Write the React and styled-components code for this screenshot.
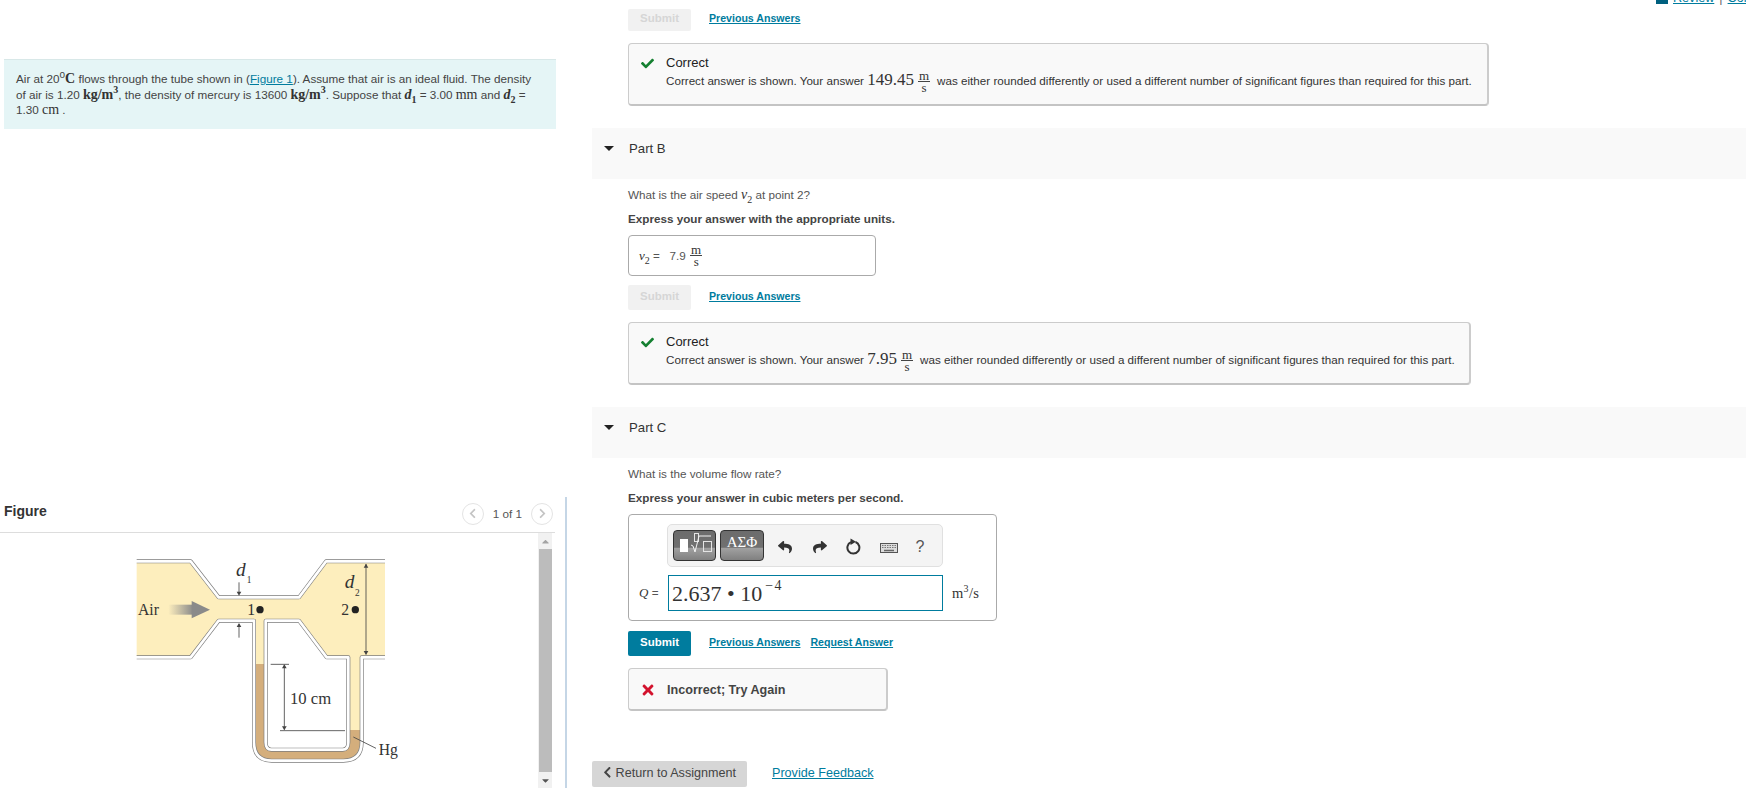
import React from 'react'
import styled, { createGlobalStyle } from 'styled-components'
import { FaCheck, FaTimes, FaChevronLeft, FaChevronRight, FaReply, FaShare, FaCaretDown, FaCaretUp } from 'react-icons/fa'

const GlobalStyle = createGlobalStyle`
  html, body { margin: 0; padding: 0; height: 788px; overflow: hidden; background: #fff; }
  body { font-family: "Liberation Sans", Arial, sans-serif; font-size: 11.7px; color: #444; }
`

const Page = styled.div`
  position: relative;
  display: flex;
  width: 1746px;
  height: 788px;
  overflow: hidden;
`

const LeftPane = styled.div`
  width: 567px;
  flex: none;
  display: flex;
  flex-direction: column;
  padding-top: 59px;
  box-sizing: border-box;
`

const RightPane = styled.div`
  flex: 1;
  padding-left: 25px;
  min-width: 0;
`

const Intro = styled.div`
  margin-left: 4px;
  width: 552px;
  height: 70px;
  box-sizing: border-box;
  padding: 11px 0 0 12px;
  background: #e5f5f6;
  border-top: 1px solid #d8e8e8;
  line-height: 15.5px;
  white-space: nowrap;
`

const Link = styled.a`
  color: #007c9e;
  text-decoration: underline;
  white-space: nowrap;
  font-size: ${p => p.$size || 11.7}px;
  font-weight: ${p => (p.$bold ? 700 : 400)};
`

const FeedbackLink = styled(Link)`
  margin-bottom: 3px;
`

const MathText = styled.span`
  font-family: "Liberation Serif", "DejaVu Serif", serif;
  font-size: ${p => p.$size || 14}px;
  font-style: ${p => (p.$italic ? 'italic' : 'normal')};
  font-weight: ${p => (p.$bold ? 700 : 400)};
  color: #333;
`

const MathSub = styled.sub`
  font-size: 10px;
  font-style: normal;
  line-height: 0;
`

const MathSup = styled.sup`
  font-size: 10px;
  line-height: 0;
`

const FigureSection = styled.div`
  margin-top: 368px;
  flex: 1;
  display: flex;
  flex-direction: column;
  border-right: 2px solid #c5d6e6;
  min-height: 0;
`

const FigureHeader = styled.div`
  height: 36px;
  box-sizing: border-box;
  margin-right: 10px;
  padding: 0 2px 0 4px;
  display: flex;
  align-items: center;
  border-bottom: 1px solid #ddd;
`

const FigureTitle = styled.div`
  flex: 1;
  margin-bottom: 8px;
  font-size: 14px;
  font-weight: 700;
  color: #333;
`

const Pager = styled.div`
  display: flex;
  align-items: center;
  gap: 9px;
  margin-bottom: 2px;
  color: #555;
`

const PagerButton = styled.div`
  width: 22px;
  height: 22px;
  box-sizing: border-box;
  border: 1px solid #e4e4e4;
  border-radius: 50%;
  display: flex;
  align-items: center;
  justify-content: center;
  color: #c4c4c4;
  font-size: 11px;
`

const FigureBody = styled.div`
  flex: 1;
  display: flex;
  margin-right: 13px;
  min-height: 0;
`

const FigureCanvas = styled.div`
  flex: 1;
  padding: 6px 0 0 100px;
  min-width: 0;
`

const TubeSvg = styled.svg`
  display: block;
`

const Scrollbar = styled.div`
  width: 14px;
  display: flex;
  flex-direction: column;
  align-items: center;
  background: #f1f1f1;
  font-size: 11px;
`

const ScrollEnd = styled.div`
  height: 16px;
  flex: none;
  display: flex;
  align-items: center;
  justify-content: center;
  color: ${p => (p.$dark ? '#555' : '#a3a3a3')};
`

const ScrollThumb = styled.div`
  flex: 1;
  width: 13px;
  background: #bcbcbc;
`

const ActionRow = styled.div`
  display: flex;
  align-items: center;
  gap: 18px;
  margin-top: ${p => p.$top || 0}px;
`

const SubmitButton = styled.div`
  width: 63px;
  height: ${p => p.$h || 25}px;
  box-sizing: border-box;
  padding-bottom: 4px;
  display: flex;
  align-items: center;
  justify-content: center;
  font-size: 11.5px;
  font-weight: 700;
  border-radius: 2px;
  color: ${p => (p.$active ? '#fff' : '#d6d6d6')};
  background: ${p => (p.$active ? '#007c9e' : '#f1f1f1')};
`

const Answers = styled.div`
  display: flex;
  gap: 10px;
  padding-bottom: 4px;
`

const Feedback = styled.div`
  box-sizing: border-box;
  width: ${p => p.$w}px;
  height: ${p => p.$h}px;
  margin-top: ${p => p.$top}px;
  display: flex;
  align-items: ${p => (p.$center ? 'center' : 'flex-start')};
  padding: ${p => (p.$center ? 2 : 11)}px 0 0 13px;
  border: 1px solid #ccc;
  border-bottom: 2px solid #c4c4c4;
  border-right: 2px solid #ccc;
  border-radius: 4px;
  background: #f9f9f9;
`

const StatusIcon = styled.div`
  width: ${p => (p.$bad ? 27 : 25)}px;
  height: 16px;
  margin-left: ${p => (p.$bad ? -2 : -1)}px;
  flex: none;
  display: flex;
  align-items: center;
  font-size: ${p => (p.$bad ? 16 : 13)}px;
  color: ${p => (p.$bad ? '#d3132e' : '#158031')};
`

const FeedbackText = styled.div`
  font-size: 11.65px;
  line-height: 18px;
  white-space: nowrap;
  color: #333;
`

const FeedbackTitle = styled.div`
  font-size: ${p => (p.$bold ? 12.6 : 13)}px;
  line-height: 16px;
  font-weight: ${p => (p.$bold ? 700 : 400)};
  color: ${p => (p.$bold ? '#444' : '#222')};
`

const Frac = styled.span`
  display: inline-flex;
  flex-direction: column;
  vertical-align: middle;
  align-items: center;
  font-family: "Liberation Serif", serif;
  font-size: 13px;
  line-height: 9px;
  margin: ${p => p.$m || '0 7px 0 4px'};
  color: #333;
`

const FracTop = styled.span`
  border-bottom: 1px solid #444;
  padding: 0 1px 1px;
  margin-bottom: 1px;
  line-height: 8px;
`

const PartBar = styled.div`
  height: 51px;
  box-sizing: border-box;
  margin-top: 22px;
  display: flex;
  align-items: center;
  background: #f9f9f9;
  padding: 0 0 10px 12px;
  font-size: 13.2px;
  color: #333;
`

const PartCaret = styled.span`
  width: 0;
  height: 0;
  margin-right: 15px;
  border-left: 5px solid transparent;
  border-right: 5px solid transparent;
  border-top: 5px solid #222;
`

const PartBody = styled.div`
  padding: ${p => p.$top ?? 8}px 0 0 36px;
`

const Question = styled.div`
  line-height: 16px;
  color: #555;
`

const Instruction = styled.div`
  margin-top: 8px;
  line-height: 16px;
  font-weight: 700;
  color: #444;
`

const StaticAnswer = styled.div`
  box-sizing: border-box;
  width: 248px;
  height: 41px;
  margin-top: 8px;
  padding-left: 10px;
  display: flex;
  align-items: center;
  border: 1px solid #aaa;
  border-radius: 4px;
  color: #555;
  white-space: pre;
`

const AnswerPanel = styled.div`
  box-sizing: border-box;
  width: 369px;
  height: 107px;
  margin-top: 8px;
  padding: 9px 9px 0 10px;
  border: 1px solid #aaa;
  border-radius: 4px;
`

const Toolbar = styled.div`
  box-sizing: border-box;
  width: 276px;
  height: 43px;
  margin-left: 28px;
  padding: 0 5px;
  display: flex;
  align-items: center;
  background: #f4f4f4;
  border: 1px solid #e0e0e0;
  border-radius: 5px;
`

const TemplateButton = styled.div`
  box-sizing: border-box;
  width: ${p => p.$w}px;
  height: 31px;
  margin-right: 4px;
  display: flex;
  align-items: flex-start;
  justify-content: center;
  border: 1px solid #333;
  border-radius: 4px;
  background: linear-gradient(#6c6c6c 0%, #707070 56%, #a0a0a0 60%, #808080 100%);
  color: #fff;
  font-family: "Liberation Serif", serif;
  font-size: 15px;
  line-height: 22px;
`

const ToolIcon = styled.div`
  width: ${p => p.$w || 36}px;
  margin-top: ${p => p.$top || 2}px;
  display: flex;
  justify-content: center;
  font-size: ${p => p.$size || 14}px;
  color: ${p => p.$color || '#333'};
`

const EntryRow = styled.div`
  display: flex;
  align-items: center;
  margin-top: 8px;
`

const EntryLabel = styled.div`
  width: 29px;
  flex: none;
  color: #555;
  white-space: nowrap;
`

const Entry = styled.div`
  box-sizing: border-box;
  width: 275px;
  height: 36px;
  padding-left: 3px;
  border: 1px solid #007c9e;
  font-family: "Liberation Serif", serif;
  font-size: 22px;
  line-height: 36px;
  color: #333;
`

const Exponent = styled.span`
  font-size: 14px;
  line-height: 0;
  letter-spacing: 1.5px;
  margin-left: 3px;
  vertical-align: 11px;
`

const Unit = styled.div`
  margin-left: 9px;
  font-family: "Liberation Serif", serif;
  font-size: 14.5px;
  letter-spacing: 0.3px;
  color: #333;
  white-space: nowrap;
`

const ReturnRow = styled.div`
  margin-top: 50px;
  display: flex;
  align-items: center;
  gap: 25px;
`

const ReturnButton = styled.div`
  box-sizing: border-box;
  width: 155px;
  height: 26px;
  padding: 0 0 3px 9px;
  display: flex;
  align-items: center;
  gap: 2px;
  background: #d6d6d6;
  border-radius: 2px;
  font-size: 12.6px;
  color: #444;
  white-space: nowrap;
`

const TopNav = styled.div`
  position: absolute;
  top: -9px;
  left: 1656px;
  display: flex;
  align-items: center;
  gap: 5px;
  font-size: 12.6px;
  white-space: nowrap;
  color: #666;
`

const NavMark = styled.span`
  width: 12px;
  height: 12px;
  background: #00607f;
`

const Tube = () => (
  <TubeSvg width="320" height="248" viewBox="0 0 960 744">
    <defs>
      <linearGradient id="airArrow" x1="0" x2="1" y1="0" y2="0">
        <stop offset="0" stopColor="#fdeebd" />
        <stop offset="1" stopColor="#8a8a8a" />
      </linearGradient>
    </defs>
    <path
      d="M110 67H272L356 175H597L678 67H855V355H785V610Q785 665 730 665H515Q462 665 462 610V245H356L272 355H110Z"
      fill="#fdeebd"
    />
    <path d="M480 375V610Q480 646 515 646H730Q765 646 765 610V573" fill="none" stroke="#d4ae7c" strokeWidth="30" />
    <path d="M497 248H597L680 355H745V610Q745 627 728 627H514Q497 627 497 610Z" fill="#fff" />
    <g fill="none" strokeLinejoin="round">
      <g stroke="#7c7c7c" strokeWidth="12">
        <path d="M110 67H272L356 175H597L678 67H855" />
        <path d="M110 355H272L356 245H462V610Q462 665 515 665H730Q785 665 785 610V355H855" />
        <path d="M497 245H597L680 355H745V610Q745 632 728 632H514Q497 632 497 610Z" />
      </g>
      <g stroke="#fff" strokeWidth="8">
        <path d="M108 67H272L356 175H597L678 67H857" />
        <path d="M108 355H272L356 245H462V610Q462 665 515 665H730Q785 665 785 610V355H857" />
        <path d="M497 245H597L680 355H745V610Q745 632 728 632H514Q497 632 497 610Z" />
      </g>
    </g>
    <rect x="205" y="197" width="75" height="30" fill="url(#airArrow)" />
    <path d="M275 186L330 212L275 238Z" fill="#8a8a8a" />
    <g stroke="#444" strokeWidth="2.5" fill="#444">
      <path d="M417 130V165" />
      <path d="M417 255V296" />
      <path d="M798 75V346" />
      <path d="M553 378V572" />
      <path d="M512 376H567" />
      <path d="M540 575H735" />
      <path d="M760 594L828 628" />
      <path d="M410 158L417 170L424 158Z" stroke="none" />
      <path d="M410 264L417 252L424 264Z" stroke="none" />
      <path d="M791 86L798 74L805 86Z" stroke="none" />
      <path d="M791 336L798 348L805 336Z" stroke="none" />
      <path d="M546 388L553 376L560 388Z" stroke="none" />
      <path d="M546 562L553 574L560 562Z" stroke="none" />
    </g>
    <circle cx="480" cy="212" r="11" fill="#222" />
    <circle cx="766" cy="212" r="11" fill="#222" />
    <g fontFamily="Liberation Serif, serif" fill="#333" fontSize="47">
      <text x="114" y="228">Air</text>
      <text x="442" y="228">1</text>
      <text x="724" y="228">2</text>
      <text x="570" y="494" fontSize="50">10 cm</text>
      <text x="836" y="648">Hg</text>
      <text x="408" y="112" fontStyle="italic" fontSize="58">d</text>
      <text x="440" y="132" fontSize="28">1</text>
      <text x="734" y="148" fontStyle="italic" fontSize="58">d</text>
      <text x="765" y="170" fontSize="28">2</text>
    </g>
  </TubeSvg>
)

const TemplateIcon = () => (
  <svg width="41" height="29" viewBox="0 0 41 29">
    <rect x="6" y="8" width="8" height="13" fill="#fff" />
    <rect x="20.5" y="2.5" width="4" height="8" fill="none" stroke="#e4e4e4" />
    <path d="M17 14l2 1 2 6 4-16h12" fill="none" stroke="#f2f2f2" />
    <rect x="29.5" y="10.5" width="8" height="10" fill="none" stroke="#e4e4e4" />
  </svg>
)

const RefreshIcon = () => (
  <svg width="16" height="17" viewBox="0 0 16 17">
    <path d="M9.5 4A6 6 0 1 1 5 4.1" fill="none" stroke="#333" strokeWidth="2" />
    <path d="M4.5 0.5L10 3.8L4.5 7Z" fill="#333" />
  </svg>
)

const KeyboardIcon = () => (
  <svg width="18" height="10" viewBox="0 0 18 10">
    <rect x="0.5" y="0.5" width="17" height="9" fill="#ddd" stroke="#555" />
    <path d="M2 2.5h14M2 4.5h14" stroke="#777" strokeDasharray="1.5 1" />
    <path d="M4 7.5h10" stroke="#666" strokeWidth="1.5" />
  </svg>
)

const Metres = ({ m }) => (
  <Frac $m={m}>
    <FracTop>m</FracTop>s
  </Frac>
)

const App = () => (
  <Page>
    <GlobalStyle />
    <LeftPane>
      <Intro>
        Air at 20<MathSup>o</MathSup><MathText $bold>C</MathText> flows through the tube shown in (<Link>Figure 1</Link>). Assume that air is an ideal fluid. The density<br />
        of air is 1.20 <MathText $bold>kg/m<MathSup>3</MathSup></MathText>, the density of mercury is 13600 <MathText $bold>kg/m<MathSup>3</MathSup></MathText>. Suppose that <MathText $italic $bold>d<MathSub>1</MathSub></MathText> = 3.00 <MathText>mm</MathText> and <MathText $italic $bold>d<MathSub>2</MathSub></MathText> =<br />
        1.30 <MathText>cm</MathText> .
      </Intro>
      <FigureSection>
        <FigureHeader>
          <FigureTitle>Figure</FigureTitle>
          <Pager>
            <PagerButton><FaChevronLeft /></PagerButton>
            1 of 1
            <PagerButton><FaChevronRight /></PagerButton>
          </Pager>
        </FigureHeader>
        <FigureBody>
          <FigureCanvas><Tube /></FigureCanvas>
          <Scrollbar>
            <ScrollEnd><FaCaretUp /></ScrollEnd>
            <ScrollThumb />
            <ScrollEnd $dark><FaCaretDown /></ScrollEnd>
          </Scrollbar>
        </FigureBody>
      </FigureSection>
    </LeftPane>

    <RightPane>
      <PartBody $top={9}>
        <ActionRow>
          <SubmitButton $h={22}>Submit</SubmitButton>
          <Answers><Link $bold $size={10.6}>Previous Answers</Link></Answers>
        </ActionRow>
        <Feedback $w={861} $h={63} $top={12}>
          <StatusIcon><FaCheck /></StatusIcon>
          <FeedbackText>
            <FeedbackTitle>Correct</FeedbackTitle>
            Correct answer is shown. Your answer <MathText $size={17}>149.45</MathText><Metres />was either rounded differently or used a different number of significant figures than required for this part.
          </FeedbackText>
        </Feedback>
      </PartBody>

      <PartBar>
        <PartCaret />Part B
      </PartBar>
      <PartBody>
        <Question>What is the air speed <MathText $italic>v<MathSub>2</MathSub></MathText> at point 2?</Question>
        <Instruction>Express your answer with the appropriate units.</Instruction>
        <StaticAnswer>
          <MathText $italic $size={13}>v<MathSub>2</MathSub></MathText> =   7.9 <Metres m="0 0 0 1px" />
        </StaticAnswer>
        <ActionRow $top={9}>
          <SubmitButton>Submit</SubmitButton>
          <Answers><Link $bold $size={10.6}>Previous Answers</Link></Answers>
        </ActionRow>
        <Feedback $w={843} $h={63} $top={12}>
          <StatusIcon><FaCheck /></StatusIcon>
          <FeedbackText>
            <FeedbackTitle>Correct</FeedbackTitle>
            Correct answer is shown. Your answer <MathText $size={17}>7.95</MathText><Metres />was either rounded differently or used a different number of significant figures than required for this part.
          </FeedbackText>
        </Feedback>
      </PartBody>

      <PartBar>
        <PartCaret />Part C
      </PartBar>
      <PartBody>
        <Question>What is the volume flow rate?</Question>
        <Instruction>Express your answer in cubic meters per second.</Instruction>
        <AnswerPanel>
          <Toolbar>
            <TemplateButton $w={43}><TemplateIcon /></TemplateButton>
            <TemplateButton $w={44}>ΑΣΦ</TemplateButton>
            <ToolIcon $w={33}><FaReply /></ToolIcon>
            <ToolIcon $w={37}><FaShare /></ToolIcon>
            <ToolIcon $w={32}><RefreshIcon /></ToolIcon>
            <ToolIcon $w={37} $top={5}><KeyboardIcon /></ToolIcon>
            <ToolIcon $w={26} $size={16} $color="#555">?</ToolIcon>
          </Toolbar>
          <EntryRow>
            <EntryLabel><MathText $italic $size={13}>Q</MathText> =</EntryLabel>
            <Entry>2.637 • 10<Exponent>−4</Exponent></Entry>
            <Unit>m<MathSup>3</MathSup>/s</Unit>
          </EntryRow>
        </AnswerPanel>
        <ActionRow $top={10}>
          <SubmitButton $active>Submit</SubmitButton>
          <Answers>
            <Link $bold $size={10.6}>Previous Answers</Link>
            <Link $bold $size={10.6}>Request Answer</Link>
          </Answers>
        </ActionRow>
        <Feedback $w={260} $h={43} $top={12} $center>
          <StatusIcon $bad><FaTimes /></StatusIcon>
          <FeedbackTitle $bold>Incorrect; Try Again</FeedbackTitle>
        </Feedback>
      </PartBody>
      <ReturnRow>
        <ReturnButton><FaChevronLeft />Return to Assignment</ReturnButton>
        <FeedbackLink $size={12.6}>Provide Feedback</FeedbackLink>
      </ReturnRow>
    </RightPane>
    <TopNav>
      <NavMark />
      <Link $size={12.6}>Review</Link> | <Link $size={12.6}>Constants</Link>
    </TopNav>
  </Page>
)

export default App
